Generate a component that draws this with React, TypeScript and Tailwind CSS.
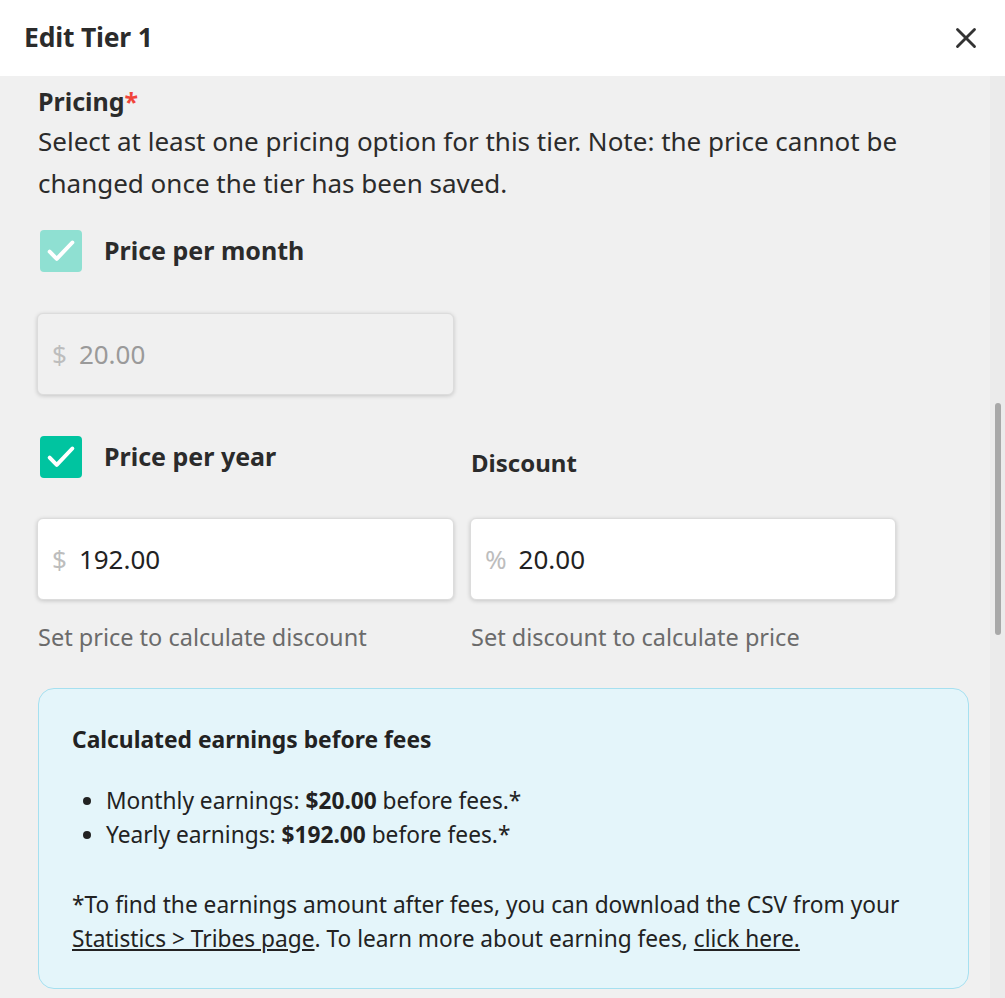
import { X } from 'lucide-react';

function Check({ muted }: { readonly muted?: boolean }) {
  return (
    <span
      className={`flex h-[42px] w-[42px] items-center justify-center rounded-[4px] ${
        muted ? 'bg-[#8fe0d2]' : 'bg-[#00c4a0]'
      }`}
    >
      <svg viewBox="0 0 24 24" className="h-[34px] w-[34px]" fill="none" stroke="white" strokeWidth="2.8" strokeLinecap="round" strokeLinejoin="round">
        <path d="M4 12.5l5 5L20 6" />
      </svg>
    </span>
  );
}

interface MoneyInputProps {
  readonly prefix: string;
  readonly value: string;
  readonly disabled?: boolean;
  readonly width: string;
}

function MoneyInput({ prefix, value, disabled, width }: MoneyInputProps) {
  return (
    <div
      className={`flex h-[82px] items-center gap-3 rounded-[6px] border border-[#dcdcdc] px-[14px] shadow-[0_1px_4px_rgba(0,0,0,0.18)] ${width} ${
        disabled ? 'bg-[#f0f0f0]' : 'bg-white'
      }`}
    >
      <span className="text-[26px] text-[#bdbdbd]">{prefix}</span>
      <span className={`text-[26px] ${disabled ? 'text-[#9a9a9a]' : 'text-[#222]'}`}>{value}</span>
    </div>
  );
}

export default function App() {
  return (
    <div className="flex h-[998px] w-[1005px] flex-col overflow-hidden bg-[#f0f0f0] font-['Noto_Sans',sans-serif] text-[#262626]">
      <header className="flex h-[76px] shrink-0 items-center justify-between bg-white pr-[22px] pl-[24px]">
        <h1 className="text-[26.5px] font-bold tracking-[-0.2px] text-[#2b2b2b]">Edit Tier 1</h1>
        <X className="h-[34px] w-[34px] text-[#333]" strokeWidth={2} />
      </header>

      <div className="flex flex-1 overflow-hidden">
        <main className="flex-1 pt-[8px] pl-[38px]">
          <h2 className="text-[25px] leading-[34px] font-bold text-[#2b2b2b]">
            Pricing<span className="text-[#f0443a]">*</span>
          </h2>
          <p className="mt-[2px] w-[900px] text-[26px] leading-[42px] text-[#2b2b2b]">
            Select at least one pricing option for this tier. Note: the price cannot be changed once the tier has been saved.
          </p>

          <div className="mt-[26px] flex items-center gap-[22px] pl-[2px]">
            <Check muted />
            <span className="text-[25px] font-bold text-[#2b2b2b]">Price per month</span>
          </div>
          <div className="mt-[41px] -ml-px">
            <MoneyInput prefix="$" value="20.00" disabled width="w-[417px]" />
          </div>

          <div className="mt-[41px] flex -ml-px gap-[16px]">
            <div className="flex w-[417px] flex-col">
              <div className="flex h-[42px] items-center gap-[22px] pl-[3px]">
                <Check />
                <span className="text-[25px] font-bold text-[#2b2b2b]">Price per year</span>
              </div>
              <div className="mt-[40px]">
                <MoneyInput prefix="$" value="192.00" width="w-[417px]" />
              </div>
              <p className="mt-[20px] pl-px text-[23.5px] text-[#6b6b6b]">Set price to calculate discount</p>
            </div>
            <div className="flex flex-col">
              <div className="flex h-[42px] items-end pl-px">
                <span className="text-[24px] leading-[30px] font-bold text-[#2b2b2b]">Discount</span>
              </div>
              <div className="mt-[40px]">
                <MoneyInput prefix="%" value="20.00" width="w-[426px]" />
              </div>
              <p className="mt-[20px] pl-px text-[23.5px] text-[#6b6b6b]">Set discount to calculate price</p>
            </div>
          </div>

          <section className="mt-[33px] w-[931px] rounded-[16px] border border-[#a6e0f0] bg-[#e4f5fa] px-[33px] pt-[36px] pb-[32px]">
            <h3 className="text-[22.8px] leading-[30px] font-bold text-[#222]">Calculated earnings before fees</h3>
            <ul className="mt-[29px] list-disc pl-[34px] text-[22.7px] leading-[34px] text-[#222]">
              <li>
                Monthly earnings: <b>$20.00</b> before fees.*
              </li>
              <li>
                Yearly earnings: <b>$192.00</b> before fees.*
              </li>
            </ul>
            <p className="mt-[36px] text-[22.7px] leading-[34px] text-[#222]">
              *To find the earnings amount after fees, you can download the CSV from your{' '}
              <a className="underline">Statistics &gt; Tribes page</a>. To learn more about earning fees,{' '}
              <a className="underline">click here.</a>
            </p>
          </section>
        </main>

        <div className="flex w-[15px] shrink-0 justify-center bg-[#ebebeb] pt-[327px]">
          <div className="h-[232px] w-[6px] rounded-full bg-[#a8a8a8]" />
        </div>
      </div>
    </div>
  );
}
